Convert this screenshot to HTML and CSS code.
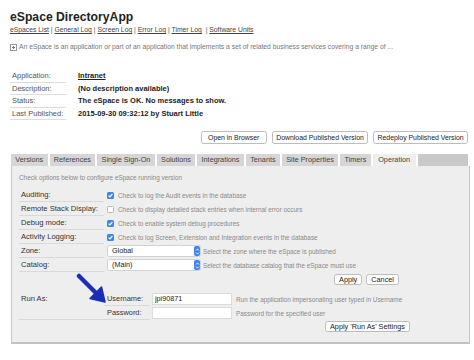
FILE: index.html
```html
<!DOCTYPE html>
<html>
<head>
<meta charset="utf-8">
<link rel="stylesheet" href="styles.css">
</head>
<body>
<div class="page">
  <h1 class="title">eSpace DirectoryApp</h1>
  <div class="nav"><a>eSpaces List</a> | <a>General Log</a> | <a>Screen Log</a> | <a>Error Log</a> | <a>Timer Log</a> &nbsp;| <a>Software Units</a></div>
  <div class="desc"><svg class="plus" width="7" height="7" viewBox="0 0 7 7"><rect x="0.5" y="0.5" width="6" height="6" fill="#fff" stroke="#999"/><path d="M2 3.5h3M3.5 2v3" stroke="#777" stroke-width="1"/></svg>An eSpace is an application or part of an application that implements a set of related business services covering a range of ...</div>

  <div class="info">
    <div class="ilabel">Application:</div><div class="ivalue"><a>Intranet</a></div>
    <div class="ilabel">Description:</div><div class="ivalue">(No description available)</div>
    <div class="ilabel">Status:</div><div class="ivalue">The eSpace is OK. No messages to show.</div>
    <div class="ilabel">Last Published:</div><div class="ivalue">2015-09-30 09:32:12 by Stuart Little</div>
  </div>

  <div class="toolbar">
    <button class="btn wide">Open in Browser</button>
    <button class="btn">Download Published Version</button>
    <button class="btn">Redeploy Published Version</button>
  </div>

  <div class="tabs">
    <div class="tab">Versions</div>
    <div class="tab">References</div>
    <div class="tab">Single Sign-On</div>
    <div class="tab">Solutions</div>
    <div class="tab">Integrations</div>
    <div class="tab">Tenants</div>
    <div class="tab">Site Properties</div>
    <div class="tab">Timers</div>
    <div class="tab active">Operation</div>
    <div class="tab filler"></div>
  </div>

  <div class="panel">
    <div class="intro">Check options below to configure eSpace running version</div>
    <div class="opts">
      <div class="row">
        <div class="olabel">Auditing:</div>
        <div class="octrl"><span class="cb on"><svg width="7" height="7" viewBox="0 0 7 7"><path d="M1.6 3.6l1.3 1.3 2.5-2.9" fill="none" stroke="#fff" stroke-width="1.2"/></svg></span><span class="hint">Check to log the Audit events in the database</span></div>
      </div>
      <div class="row">
        <div class="olabel">Remote Stack Display:</div>
        <div class="octrl"><span class="cb"></span><span class="hint">Check to display detailed stack entries when internal error occurs</span></div>
      </div>
      <div class="row">
        <div class="olabel">Debug mode:</div>
        <div class="octrl"><span class="cb on"><svg width="7" height="7" viewBox="0 0 7 7"><path d="M1.6 3.6l1.3 1.3 2.5-2.9" fill="none" stroke="#fff" stroke-width="1.2"/></svg></span><span class="hint">Check to enable system debug procedures</span></div>
      </div>
      <div class="row">
        <div class="olabel">Activity Logging:</div>
        <div class="octrl"><span class="cb on"><svg width="7" height="7" viewBox="0 0 7 7"><path d="M1.6 3.6l1.3 1.3 2.5-2.9" fill="none" stroke="#fff" stroke-width="1.2"/></svg></span><span class="hint">Check to log Screen, Extension and Integration events in the database</span></div>
      </div>
      <div class="row">
        <div class="olabel">Zone:</div>
        <div class="octrl"><span class="select">Global<span class="stepper"><svg width="5" height="9" viewBox="0 0 5 9"><path d="M1 3.5l1.5-1.6 1.5 1.6M1 5.5l1.5 1.6 1.5-1.6" fill="none" stroke="#fff" stroke-width="0.9"/></svg></span></span><span class="hint sel">Select the zone where the eSpace is published</span></div>
      </div>
      <div class="row">
        <div class="olabel">Catalog:</div>
        <div class="octrl"><span class="select">(Main)<span class="stepper"><svg width="5" height="9" viewBox="0 0 5 9"><path d="M1 3.5l1.5-1.6 1.5 1.6M1 5.5l1.5 1.6 1.5-1.6" fill="none" stroke="#fff" stroke-width="0.9"/></svg></span></span><span class="hint sel">Select the database catalog that the eSpace must use</span></div>
      </div>
      <div class="actions a1">
        <button class="btn">Apply</button>
        <button class="btn">Cancel</button>
      </div>
      <div class="runas">
        <div class="rlabel">Run As:</div>
        <div class="rrows">
          <div class="rrow">
            <div class="ulabel">Username:</div>
            <span class="input">jpi90871</span>
            <span class="hint">Run the application impersonating user typed in Username</span>
          </div>
          <div class="rrow">
            <div class="ulabel">Password:</div>
            <span class="input"></span>
            <span class="hint">Password for the specified user</span>
          </div>
        </div>
      </div>
      <div class="actions a2">
        <button class="btn">Apply 'Run As' Settings</button>
      </div>
    </div>
    <svg class="arrow" width="34" height="34" viewBox="0 0 34 34">
      <path d="M3 3 L22 22" stroke="#1a2fb5" stroke-width="4.5" stroke-linecap="round"/>
      <path d="M29 29 L14 25.5 L25.5 14 Z" fill="#1a2fb5" stroke="#1a2fb5" stroke-width="1.5" stroke-linejoin="round"/>
    </svg>
  </div>
</div>
</body>
</html>
```
FILE: styles.css
```css
* { box-sizing: border-box; }
body {
  margin: 0;
  background: #fff;
  font-family: "Liberation Sans", Arial, sans-serif;
  color: #333;
}
.page { padding: 0 0 0 10px; }
.title {
  margin: 10px 0 0 0;
  font-size: 12.2px;
  line-height: 14px;
  font-weight: bold;
  color: #222;
}
.nav {
  margin-top: 1px;
  font-size: 6.8px;
  line-height: 10px;
  color: #555;
}
.nav a { color: #444; text-decoration: underline; }
.desc {
  margin-top: 7px;
  font-size: 6.75px;
  line-height: 10px;
  color: #777;
  display: flex;
  align-items: center;
}
.plus { margin-right: 2px; flex: none; }

.info {
  margin-top: 18px;
  display: grid;
  grid-template-columns: 56px auto;
  column-gap: 12px;
  font-size: 7.5px;
}
.ilabel {
  height: 12.5px;
  line-height: 12px;
  padding-left: 2px;
  color: #555;
  border-bottom: 1px solid #ddd;
}
.ivalue {
  height: 12.5px;
  line-height: 12px;
  font-weight: bold;
  color: #222;
}
.ivalue a { text-decoration: underline; }

.toolbar {
  margin-top: 11px;
  display: flex;
  justify-content: flex-end;
  gap: 5px;
  padding-right: 6px;
}
.btn {
  font-family: "Liberation Sans", Arial, sans-serif;
  font-size: 7.3px;
  color: #222;
  background: #fff;
  border: 1px solid #bdbdbd;
  border-radius: 2.5px;
  height: 12px;
  padding: 0 4px;
  line-height: 10px;
  margin: 0;
}
.toolbar .btn { height: 13px; font-size: 6.9px; padding: 0 3.3px; }
.toolbar .btn.wide { padding: 0 6.5px; }

.tabs {
  margin-top: 10px;
  margin-left: 1px;
  margin-right: 6px;
  display: flex;
  gap: 2px;
  height: 12px;
}
.tab {
  background: #d6d6d6;
  font-size: 7.25px;
  line-height: 12px;
  color: #444;
  padding: 0 4.35px;
}
.tab.active { background: #eeeeee; padding: 0 5.5px; }
.tab.filler { flex: 1; background: #c9c9c9; }

.panel {
  position: relative;
  margin-left: 1px;
  margin-right: 4px;
  height: 178px;
  background: #eeeeee;
  border: 1px solid #c6c6c6;
  border-top: none;
  border-bottom: 2px solid #c2c2c2;
  padding: 7px 0 0 7px;
}
.intro {
  font-size: 6.4px;
  line-height: 10px;
  color: #888;
}
.opts { margin-top: 5px; }
.row {
  display: flex;
  height: 14px;
  align-items: stretch;
}
.olabel {
  width: 85px;
  flex: none;
  font-size: 7.6px;
  line-height: 14px;
  padding-left: 2px;
  color: #333;
  border-bottom: 1px solid #d9d9d9;
}
.octrl {
  display: flex;
  align-items: center;
  padding-left: 3px;
}
.cb {
  width: 7px;
  height: 7px;
  border-radius: 1.5px;
  background: #fff;
  border: 1px solid #b5b5b5;
  margin-right: 4px;
  display: flex;
}
.cb.on { background: #3b85f0; border: none; }
.hint {
  font-size: 6.4px;
  color: #8a8a8a;
  white-space: nowrap;
}
.hint.sel { margin-left: 2px; }
.select {
  position: relative;
  width: 94px;
  height: 12px;
  background: #fff;
  border: 1px solid #d2d2d2;
  border-radius: 2.5px;
  font-size: 7.2px;
  line-height: 10px;
  padding-left: 4px;
  color: #222;
}
.stepper {
  position: absolute;
  right: 0;
  top: 0;
  width: 6px;
  height: 10px;
  border-radius: 2px;
  background: #3b85f0;
  display: flex;
  align-items: center;
  justify-content: center;
}
.actions {
  display: flex;
  justify-content: flex-end;
  gap: 4px;
}
.a1 { width: 380px; margin-top: 2px; }
.a1 .btn { height: 11px; line-height: 9px; }
.a2 { width: 391px; margin-top: 1px; }
.a2 .btn { height: 11px; line-height: 9px; }
.runas {
  display: flex;
  margin-top: 7px;
}
.rlabel {
  width: 85px;
  flex: none;
  font-size: 7.6px;
  line-height: 14px;
  padding-left: 2px;
  color: #333;
  border-bottom: 1px solid #d9d9d9;
}
.rrow {
  display: flex;
  align-items: center;
  height: 14px;
}
.ulabel {
  width: 46px;
  height: 14px;
  font-size: 7.4px;
  line-height: 14px;
  padding-left: 3px;
  color: #333;
  border-bottom: 1px solid #d9d9d9;
  margin-right: 2px;
}
.input {
  width: 80px;
  height: 12px;
  background: #fff;
  border: 1px solid #dcdcdc;
  font-size: 7.2px;
  line-height: 10px;
  padding-left: 2px;
  color: #222;
  margin-right: 4px;
}
.arrow {
  position: absolute;
  left: 64px;
  top: 107px;
}
```
